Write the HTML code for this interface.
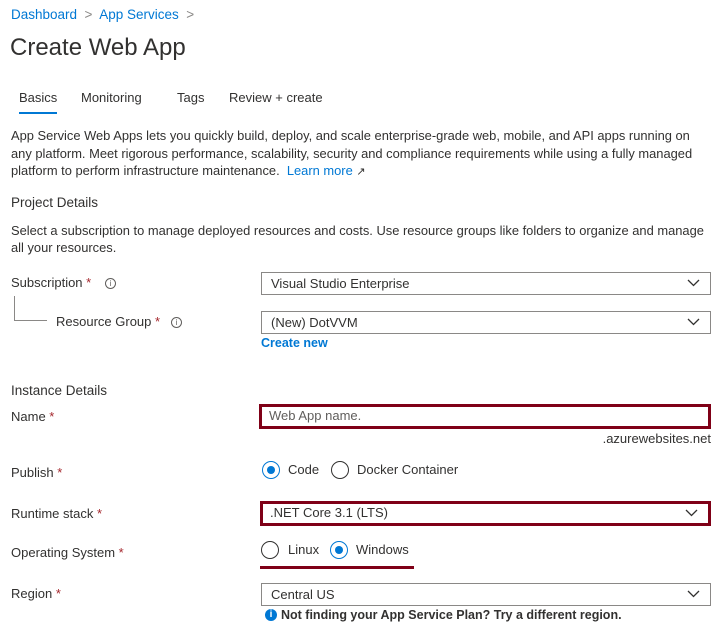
<!DOCTYPE html>
<html><head><meta charset="utf-8"><style>
*{margin:0;padding:0;box-sizing:border-box}
body{width:728px;height:640px;background:#fff;font-family:"Liberation Sans",sans-serif;font-size:13px;color:#323130;position:relative;overflow:hidden}
.a{position:absolute;white-space:nowrap;line-height:16px}
.blue{color:#0078d4}
.req{color:#a4262c}
.sb{font-weight:bold;color:#323130}
.dd{position:absolute;left:261px;width:450px;height:23px;border:1px solid #8a8886;padding-left:9px;line-height:21px}
.red{border:3px solid #7f0017;line-height:17px;padding-left:7px}
.chev{position:absolute;right:10px;top:6px}
.rad{position:absolute;width:18px;height:18px;border:1px solid #323130;border-radius:50%}
.rad.on{border-color:#0078d4}
.rad.on::after{content:"";position:absolute;left:4px;top:4px;width:8px;height:8px;border-radius:50%;background:#0078d4}
.info{position:absolute;width:11px;height:11px;border:1px solid #605e5c;border-radius:50%;font-size:8px;line-height:9px;text-align:center;color:#605e5c}
.p{font-size:12.9px}
</style></head><body>
<div class="a blue" style="left:11px;top:7px;font-size:13.5px">Dashboard <span style="color:#8a8886">&nbsp;&gt;&nbsp;</span> App Services <span style="color:#8a8886">&nbsp;&gt;</span></div>
<div class="a" style="left:10px;top:34px;font-size:24px;line-height:28px;">Create Web App</div>
<div class="a" style="left:19px;top:90px;">Basics</div>
<div class="a" style="left:81px;top:90px;">Monitoring</div>
<div class="a" style="left:177px;top:90px;">Tags</div>
<div class="a" style="left:229px;top:90px;">Review + create</div>
<div style="position:absolute;left:19px;top:112px;width:38px;height:2px;background:#0078d4"></div>
<div class="a p" style="left:11px;top:128px;">App Service Web Apps lets you quickly build, deploy, and scale enterprise-grade web, mobile, and API apps running on</div>
<div class="a p" style="left:11px;top:146px;">any platform. Meet rigorous performance, scalability, security and compliance requirements while using a fully managed</div>
<div class="a p" style="left:11px;top:163px;">platform to perform infrastructure maintenance. &nbsp;<span class="blue">Learn more</span> <span style="font-size:11px">&#x2197;&#xFE0E;</span></div>
<div class="a" style="left:11px;top:195px;font-size:13.5px;">Project Details</div>
<div class="a p" style="left:11px;top:223px;">Select a subscription to manage deployed resources and costs. Use resource groups like folders to organize and manage</div>
<div class="a p" style="left:11px;top:240px;">all your resources.</div>

<div class="a" style="left:11px;top:275px;">Subscription <span class="req">*</span></div>
<div class="info" style="left:105px;top:278px;">i</div>
<div class="dd" style="top:272px;">Visual Studio Enterprise<svg class="chev" width="13" height="8"><path d="M1 1l5.5 5.5L12 1" stroke="#323130" fill="none" stroke-width="1.3"/></svg></div>
<div style="position:absolute;left:14px;top:296px;width:1px;height:24px;background:#8a8886"></div>
<div style="position:absolute;left:14px;top:320px;width:33px;height:1px;background:#8a8886"></div>
<div class="a" style="left:56px;top:314px;">Resource Group <span class="req">*</span></div>
<div class="info" style="left:171px;top:317px;">i</div>
<div class="dd" style="top:311px;">(New) DotVVM<svg class="chev" width="13" height="8"><path d="M1 1l5.5 5.5L12 1" stroke="#323130" fill="none" stroke-width="1.3"/></svg></div>
<div class="a blue" style="left:261px;top:335px;font-weight:bold;font-size:12.5px">Create new</div>

<div class="a" style="left:11px;top:383px;font-size:13.5px;">Instance Details</div>
<div class="a" style="left:11px;top:409px;">Name <span class="req">*</span></div>
<div class="dd red" style="top:404px;left:259px;width:452px;height:25px;color:#605e5c">Web App name.</div>
<div class="a" style="right:17px;top:431px;">.azurewebsites.net</div>

<div class="a" style="left:11px;top:465px;">Publish <span class="req">*</span></div>
<div class="rad on" style="left:262px;top:461px;"></div>
<div class="a" style="left:288px;top:462px;">Code</div>
<div class="rad" style="left:331px;top:461px;"></div>
<div class="a" style="left:357px;top:462px;">Docker Container</div>

<div class="a" style="left:11px;top:506px;">Runtime stack <span class="req">*</span></div>
<div class="dd red" style="top:501px;left:260px;width:451px;height:25px;">.NET Core 3.1 (LTS)<svg class="chev" width="13" height="8" style="top:5px"><path d="M1 1l5.5 5.5L12 1" stroke="#323130" fill="none" stroke-width="1.3"/></svg></div>

<div class="a" style="left:11px;top:545px;">Operating System <span class="req">*</span></div>
<div class="rad" style="left:261px;top:541px;"></div>
<div class="a" style="left:288px;top:542px;">Linux</div>
<div class="rad on" style="left:330px;top:541px;"></div>
<div class="a" style="left:356px;top:542px;">Windows</div>
<div style="position:absolute;left:260px;top:566px;width:154px;height:3px;background:#7f0017"></div>

<div class="a" style="left:11px;top:586px;">Region <span class="req">*</span></div>
<div class="dd" style="top:583px;">Central US<svg class="chev" width="13" height="8"><path d="M1 1l5.5 5.5L12 1" stroke="#323130" fill="none" stroke-width="1.3"/></svg></div>
<div style="position:absolute;left:265px;top:609px;width:12px;height:12px;border-radius:50%;background:#0078d4;color:#fff;font-size:10px;font-weight:bold;line-height:12px;text-align:center">i</div>
<div class="a" style="left:281px;top:607px;font-weight:bold;font-size:12.5px">Not finding your App Service Plan? Try a different region.</div>
</body></html>
